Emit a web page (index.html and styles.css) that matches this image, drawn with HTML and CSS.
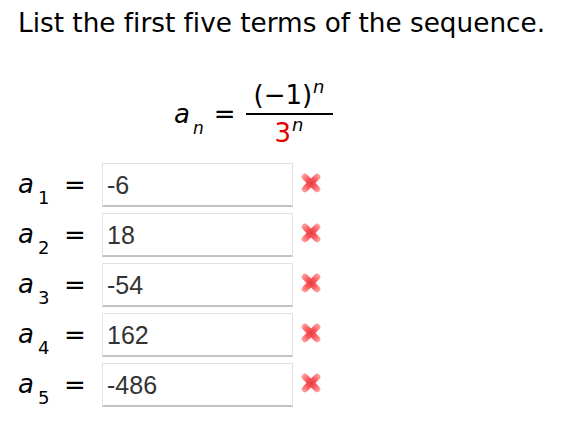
FILE: index.html
```html
<!DOCTYPE html>
<html>
<head>
<meta charset="utf-8">
<link rel="stylesheet" href="styles.css">
</head>
<body>
<div class="page">
  <div class="title">List the first five terms of the sequence.</div>

  <div class="formula">
    <span class="var">a<sub class="sub">n</sub></span>
    <span class="eq">=</span>
    <span class="frac">
      <span class="num">(−1)<sup class="sup">n</sup></span>
      <span class="den"><span class="red">3</span><sup class="sup">n</sup></span>
    </span>
  </div>

  <div class="rows">
    <div class="row">
      <span class="var label">a<sub class="sub digit">1</sub></span>
      <span class="eq">=</span>
      <input class="answer" type="text" value="-6" readonly>
      <svg class="wrong" viewBox="0 0 20 20" width="20" height="20"><use href="#x"/></svg>
    </div>
    <div class="row">
      <span class="var label">a<sub class="sub digit">2</sub></span>
      <span class="eq">=</span>
      <input class="answer" type="text" value="18" readonly>
      <svg class="wrong" viewBox="0 0 20 20" width="20" height="20"><use href="#x"/></svg>
    </div>
    <div class="row">
      <span class="var label">a<sub class="sub digit">3</sub></span>
      <span class="eq">=</span>
      <input class="answer" type="text" value="-54" readonly>
      <svg class="wrong" viewBox="0 0 20 20" width="20" height="20"><use href="#x"/></svg>
    </div>
    <div class="row">
      <span class="var label">a<sub class="sub digit">4</sub></span>
      <span class="eq">=</span>
      <input class="answer" type="text" value="162" readonly>
      <svg class="wrong" viewBox="0 0 20 20" width="20" height="20"><use href="#x"/></svg>
    </div>
    <div class="row">
      <span class="var label">a<sub class="sub digit">5</sub></span>
      <span class="eq">=</span>
      <input class="answer" type="text" value="-486" readonly>
      <svg class="wrong" viewBox="0 0 20 20" width="20" height="20"><use href="#x"/></svg>
    </div>
  </div>
</div>

<svg width="0" height="0" class="defs">
  <defs>
    <radialGradient id="xg" cx="10" cy="10" r="10" gradientUnits="userSpaceOnUse">
      <stop offset="0" stop-color="#e83a3e"/>
      <stop offset="0.5" stop-color="#f95a5d"/>
      <stop offset="1" stop-color="#ff9494"/>
    </radialGradient>
    <g id="x" stroke="url(#xg)" stroke-width="6.5" stroke-linecap="round" fill="none">
      <path d="M4 4 L16 16"/>
      <path d="M16 4 L4 16"/>
    </g>
  </defs>
</svg>
</body>
</html>
```

FILE: styles.css
```css
html, body {
  margin: 0;
  padding: 0;
  background: #fff;
}

.page {
  padding: 8px 0 0 18px;
  font-family: "DejaVu Sans", Verdana, sans-serif;
  font-variant-ligatures: none;
  color: #000;
}

.title {
  font-size: 26.3px;
  line-height: 30px;
  white-space: nowrap;
}

.formula {
  display: flex;
  align-items: center;
  margin: 42px 0 0 156px;
  font-size: 26px;
  line-height: 30px;
}

.var {
  font-style: italic;
  display: inline-block;
  white-space: nowrap;
}

.sub {
  font-size: 17px;
  vertical-align: -11px;
  line-height: 0;
  margin-left: 3px;
}

.sub.digit {
  font-style: normal;
  font-size: 18px;
  margin-left: 4px;
}

.sup {
  font-size: 18px;
  font-style: italic;
  vertical-align: 11px;
  line-height: 0;
  margin-left: 1px;
}

.formula .eq {
  margin: 0 10px 0 10px;
}

.frac {
  display: inline-flex;
  flex-direction: column;
  align-items: center;
  width: 87px;
}

.num {
  padding-bottom: 3px;
  border-bottom: 2px solid #000;
  width: 100%;
  text-align: center;
}

.den {
  padding-top: 3px;
}

.red {
  color: #e00000;
}

.defs {
  position: absolute;
}

.rows {
  display: flex;
  flex-direction: column;
  gap: 6px;
  margin-top: 15px;
}

.row {
  display: flex;
  align-items: center;
  height: 44px;
  font-size: 26px;
}

.label {
  width: 46px;
  line-height: 30px;
  margin-top: -2px;
}

.row .eq {
  width: 20px;
  margin-right: 18px;
  text-align: center;
  line-height: 30px;
}

.answer {
  box-sizing: border-box;
  width: 191px;
  height: 44px;
  margin: 0;
  padding: 2px 4px 0;
  border: 1px solid #e2e2e2;
  border-bottom: 2px solid #c4c4c4;
  border-radius: 0;
  font-family: "Liberation Sans", Arial, sans-serif;
  font-size: 25px;
  color: #333;
  background: #fff;
  outline: none;
}

.wrong {
  margin-left: 8px;
  margin-top: -4px;
}
```
